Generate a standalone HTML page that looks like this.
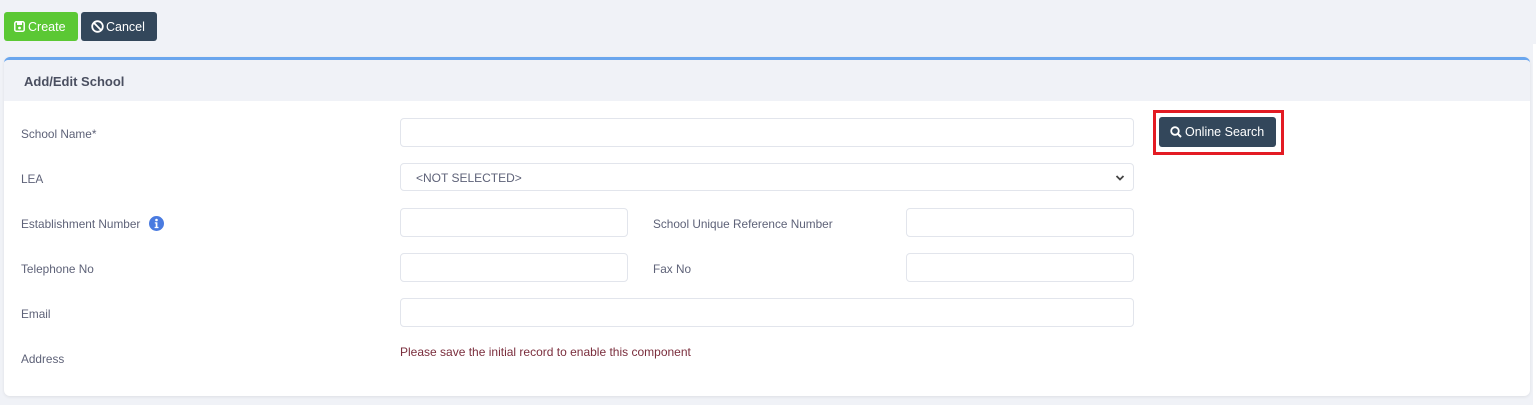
<!DOCTYPE html>
<html><head><style>
*{box-sizing:border-box;margin:0;padding:0}
body{width:1536px;height:405px;background:#f0f2f7;font-family:"Liberation Sans",sans-serif;position:relative;overflow:hidden;color:#5e6278}
.btn{position:absolute;top:12px;height:29px;border-radius:3px;color:#fff;font-size:12.5px;display:flex;align-items:center;padding-left:10px}
.card{position:absolute;left:4px;top:57px;width:1526px;height:339px;background:#fff;border-radius:6px;border-top:3px solid #6aa6ee;box-shadow:0 1px 3px rgba(0,0,0,.08)}
.hd{height:41px;background:#f0f2f7;border-radius:4px 4px 0 0;font-size:13px;font-weight:bold;color:#4a4f60;padding:14px 0 0 20px}
.lbl{position:absolute;left:21px;font-size:11.8px;color:#5e6278}
.in{position:absolute;height:29px;border:1px solid #e2e5ec;border-radius:4px;background:#fff}
</style></head><body>
<div class="btn" style="left:4px;width:74px;background:#5bc834">
<svg width="11" height="11" viewBox="0 0 11 11" style="margin-right:3px"><rect x="0.8" y="0.8" width="9.4" height="9.4" rx="1.5" fill="none" stroke="#fff" stroke-width="1.5"/><rect x="3" y="1" width="5" height="3" fill="#fff"/><circle cx="5.5" cy="7" r="1.4" fill="#fff"/></svg>Create</div>
<div class="btn" style="left:81px;width:76px;background:#33475b">
<svg width="13" height="13" viewBox="0 0 13 13" style="margin-right:2px"><circle cx="6.5" cy="6.5" r="5.3" fill="none" stroke="#fff" stroke-width="1.8"/><line x1="2.8" y1="2.8" x2="10.2" y2="10.2" stroke="#fff" stroke-width="1.8"/></svg>Cancel</div>
<div style="position:absolute;left:1533px;top:44px;width:3px;height:361px;background:#fff"></div>
<div class="card"><div class="hd">Add/Edit School</div></div>
<div class="lbl" style="top:127px">School Name*</div>
<div class="in" style="left:400px;top:118px;width:734px"></div>
<div style="position:absolute;left:1153px;top:110px;width:131px;height:45px;border:3px solid #e31b23"></div>
<div class="btn" style="left:1159px;top:117px;width:117px;height:30px;background:#33475b;padding-left:11px"><svg width="12" height="12" viewBox="0 0 12 12" style="margin-right:3px"><circle cx="5" cy="5" r="3.8" fill="none" stroke="#fff" stroke-width="1.8"/><line x1="7.8" y1="7.8" x2="11" y2="11" stroke="#fff" stroke-width="2"/></svg>Online Search</div>
<div class="lbl" style="top:172px">LEA</div>
<div class="in" style="left:400px;top:163px;width:734px;height:28px;font-size:12px;color:#5e6278;padding:7px 0 0 15px">&lt;NOT SELECTED&gt;
<svg width="10" height="8" viewBox="0 0 10 8" style="position:absolute;right:8px;top:10px"><path d="M1.5 2 L5 5.5 L8.5 2" fill="none" stroke="#444" stroke-width="1.8"/></svg></div>
<div class="lbl" style="top:217px">Establishment Number</div>
<svg width="15" height="15" viewBox="0 0 15 15" style="position:absolute;left:149px;top:216px"><circle cx="7.5" cy="7.5" r="7.5" fill="#4a7be0"/><circle cx="7.5" cy="4" r="1.3" fill="#fff"/><path d="M5.8 6.3h2.6v4.6h1.1v1.2H5.6v-1.2h1.1V7.5h-.9z" fill="#fff"/></svg>
<div class="in" style="left:400px;top:208px;width:228px"></div>
<div class="lbl" style="left:653px;top:217px">School Unique Reference Number</div>
<div class="in" style="left:906px;top:208px;width:228px"></div>
<div class="lbl" style="top:262px">Telephone No</div>
<div class="in" style="left:400px;top:253px;width:228px"></div>
<div class="lbl" style="left:653px;top:262px">Fax No</div>
<div class="in" style="left:906px;top:253px;width:228px"></div>
<div class="lbl" style="top:307px">Email</div>
<div class="in" style="left:400px;top:298px;width:734px"></div>
<div class="lbl" style="top:352px">Address</div>
<div class="lbl" style="left:400px;top:345px;color:#7a2d3c;font-size:12px">Please save the initial record to enable this component</div>
</body></html>
